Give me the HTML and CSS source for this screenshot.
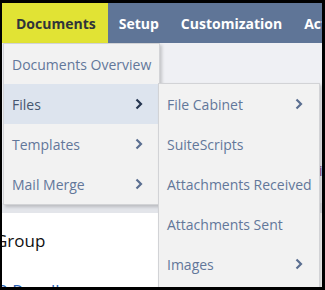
FILE: index.html
```html
<!DOCTYPE html>
<html>
<head>
<meta charset="utf-8">
<link rel="stylesheet" href="styles.css">
</head>
<body>
<div class="frame">
  <nav class="nav">
    <div class="tab active">Documents</div>
    <div class="tab">Setup</div>
    <div class="tab">Customization</div>
    <div class="tab">Activities</div>
  </nav>
  <div class="page">
    <div class="band"><span class="peek">i</span></div>
    <div class="strip"></div>
    <div class="content">
      <div class="group">Group</div>
      <div class="link">2 Rovell</div>
    </div>
  </div>

  <ul class="menu menu-main">
    <li class="item"><span>Documents Overview</span></li>
    <li class="item hover"><span>Files</span><svg class="chev" viewBox="0 0 8 12"><path d="M1.5 1.5 L6 6 L1.5 10.5"/></svg></li>
    <li class="item"><span>Templates</span><svg class="chev" viewBox="0 0 8 12"><path d="M1.5 1.5 L6 6 L1.5 10.5"/></svg></li>
    <li class="item"><span>Mail Merge</span><svg class="chev" viewBox="0 0 8 12"><path d="M1.5 1.5 L6 6 L1.5 10.5"/></svg></li>
  </ul>

  <ul class="menu menu-sub">
    <li class="item"><span>File Cabinet</span><svg class="chev" viewBox="0 0 8 12"><path d="M1.5 1.5 L6 6 L1.5 10.5"/></svg></li>
    <li class="item"><span>SuiteScripts</span></li>
    <li class="item"><span>Attachments Received</span></li>
    <li class="item"><span>Attachments Sent</span></li>
    <li class="item"><span>Images</span><svg class="chev" viewBox="0 0 8 12"><path d="M1.5 1.5 L6 6 L1.5 10.5"/></svg></li>
  </ul>
</div>
</body>
</html>
```
FILE: styles.css
```css
html, body {
  margin: 0;
  padding: 0;
  background: #ffffff;
}

.frame {
  position: relative;
  width: 325px;
  height: 290px;
  box-sizing: border-box;
  border-style: solid;
  border-color: #000;
  border-width: 3px 3px 3px 2px;
  overflow: hidden;
  font-family: "Open Sans", "Liberation Sans", sans-serif;
  background: #fff;
}

.nav {
  display: flex;
  height: 40px;
  background: #5f7597;
  white-space: nowrap;
}

.tab {
  display: flex;
  align-items: center;
  padding: 0 11px;
  font-size: 14px;
  font-weight: 700;
  color: #ffffff;
}

.tab.active {
  background: #e1e334;
  color: #30343a;
  padding: 0 12px 0 14px;
}

.page {
  display: flex;
  flex-direction: column;
}

.band {
  position: relative;
  height: 160px;
  background: #eff0f4;
}

.peek {
  position: absolute;
  left: 317px;
  top: 118px;
  font-size: 14px;
  color: #7a3f8f;
}

.strip {
  height: 10px;
  background: #e3e5ea;
}

.content {
  padding-top: 16px;
}

.group {
  margin-left: -7px;
  font-size: 17px;
  color: #111;
  line-height: 24px;
}

.link {
  margin-top: 26px;
  margin-left: -4px;
  font-size: 17px;
  color: #2a64b4;
}

.menu {
  position: absolute;
  margin: 0;
  padding: 0;
  list-style: none;
  background: #f2f2f2;
  border: 1px solid #d2d3d6;
  box-shadow: 2px 2px 3px rgba(0, 0, 0, 0.18);
}

.menu-main {
  left: 1px;
  top: 40px;
  width: 155px;
}

.menu-sub {
  left: 156px;
  top: 80px;
  width: 160px;
  height: 220px;
}

.item {
  display: flex;
  align-items: center;
  justify-content: space-between;
  height: 40px;
  padding: 0 16px 0 8px;
  font-size: 14px;
  white-space: nowrap;
  color: #62779a;
}

.item.hover {
  background: #dde4ee;
  color: #46566f;
}

.chev {
  flex: none;
  width: 8px;
  height: 12px;
  fill: none;
  stroke: #5b6f91;
  stroke-width: 2.2;
}

.item.hover .chev {
  stroke: #263650;
}
```
